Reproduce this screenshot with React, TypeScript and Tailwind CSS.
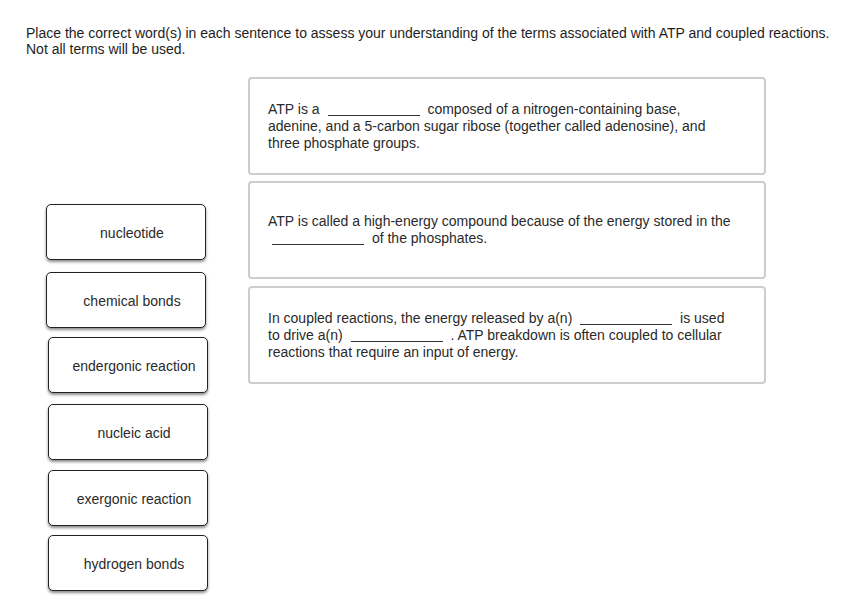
const terms = [
  { label: "nucleotide", className: "mt-[127px]" },
  { label: "chemical bonds", className: "mt-[12px]" },
  { label: "endergonic reaction", className: "ml-[2px] mt-[9px]" },
  { label: "nucleic acid", className: "ml-[2px] mt-[11px]" },
  { label: "exergonic reaction", className: "ml-[2px] mt-[10px]" },
  { label: "hydrogen bonds", className: "ml-[2px] mt-[9px]" },
];

function Blank() {
  return <span className="mx-[4px] inline-block w-[92px] border-b border-[#333] align-[-2px]" />;
}

function SentenceCard({ children, className = "" }: { children: React.ReactNode; className?: string }) {
  return (
    <div className={`flex h-[98px] w-[518px] items-center rounded-[4px] border-2 border-[#cdcdcd] bg-white pl-[18px] ${className}`}>
      <p className="w-[468px] leading-[17px] text-[#2a2a2a]">{children}</p>
    </div>
  );
}

export default function App() {
  return (
    <main className="min-h-screen bg-white font-['Liberation_Sans',Arial,sans-serif] text-[14px] text-[#1e1e1e]">
      <header className="pl-[26px] pt-[25px] leading-[16px]">
        <p>Place the correct word(s) in each sentence to assess your understanding of the terms associated with ATP and coupled reactions.</p>
        <p>Not all terms will be used.</p>
      </header>

      <section className="mt-[20px] flex">
        <div className="flex w-[248px] flex-col pl-[46px]">
          {terms.map((term) => (
            <div
              key={term.label}
              className={`flex h-[56px] w-[160px] items-center justify-center rounded-[5px] border border-[#222] bg-white pl-[13px] pr-[1px] pt-[3px] text-[#2a2a2a] shadow-[0_2px_3px_rgba(0,0,0,0.45)] ${term.className}`}
            >
              {term.label}
            </div>
          ))}
        </div>

        <div className="flex flex-col">
          <SentenceCard>
            ATP is a <Blank /> composed of a nitrogen-containing base, adenine, and a 5-carbon sugar ribose (together called adenosine), and three phosphate groups.
          </SentenceCard>
          <SentenceCard className="mt-[6px]">
            ATP is called a high-energy compound because of the energy stored in the <Blank /> of the phosphates.
          </SentenceCard>
          <SentenceCard className="mt-[7px]">
            In coupled reactions, the energy released by a(n) <Blank /> is used to drive a(n) <Blank /> . ATP breakdown is often coupled to cellular reactions that require an input of energy.
          </SentenceCard>
        </div>
      </section>
    </main>
  );
}
